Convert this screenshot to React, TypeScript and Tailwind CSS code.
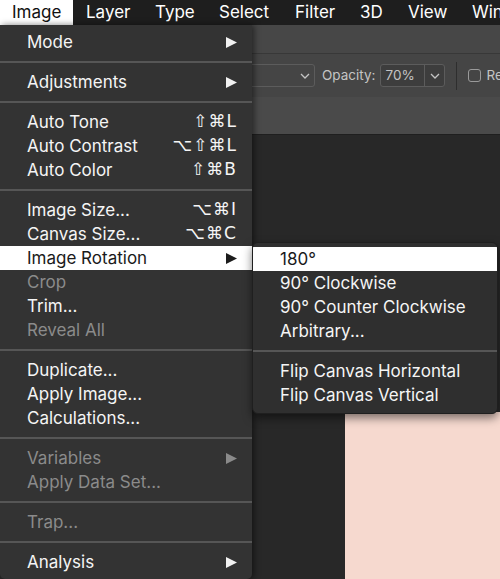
type Item =
  | { sep: true }
  | { label: string; keys?: string; arrow?: boolean; disabled?: boolean; active?: boolean; sep?: false };

const mainItems: Item[] = [
  { label: "Mode", arrow: true },
  { sep: true },
  { label: "Adjustments", arrow: true },
  { sep: true },
  { label: "Auto Tone", keys: "⇧⌘L" },
  { label: "Auto Contrast", keys: "⌥⇧⌘L" },
  { label: "Auto Color", keys: "⇧⌘B" },
  { sep: true },
  { label: "Image Size...", keys: "⌥⌘I" },
  { label: "Canvas Size...", keys: "⌥⌘C" },
  { label: "Image Rotation", arrow: true, active: true },
  { label: "Crop", disabled: true },
  { label: "Trim..." },
  { label: "Reveal All", disabled: true },
  { sep: true },
  { label: "Duplicate..." },
  { label: "Apply Image..." },
  { label: "Calculations..." },
  { sep: true },
  { label: "Variables", arrow: true, disabled: true },
  { label: "Apply Data Set...", disabled: true },
  { sep: true },
  { label: "Trap...", disabled: true },
  { sep: true },
  { label: "Analysis", arrow: true },
];

const subItems: Item[] = [
  { label: "180°", active: true },
  { label: "90° Clockwise" },
  { label: "90° Counter Clockwise" },
  { label: "Arbitrary..." },
  { sep: true },
  { label: "Flip Canvas Horizontal" },
  { label: "Flip Canvas Vertical" },
];

const menuBar = [
  { label: "Image", w: "w-[73px]", active: true },
  { label: "Layer", w: "w-[69px]" },
  { label: "Type", w: "w-[64px]" },
  { label: "Select", w: "w-[76px]" },
  { label: "Filter", w: "w-[65px]" },
  { label: "3D", w: "w-[48px]" },
  { label: "View", w: "w-[64px]" },
  { label: "Window", w: "w-[80px]" },
];

function Arrow({ dark, dim }: { dark?: boolean; dim?: boolean }) {
  return (
    <svg width="11" height="11" viewBox="0 0 11 11" className="shrink-0">
      <polygon points="0,0 11,5.5 0,11" fill={dark ? "#1c1c1c" : dim ? "#8a8a8a" : "#f2f2f2"} />
    </svg>
  );
}

function Chevron() {
  return (
    <svg width="10" height="6" viewBox="0 0 10 6">
      <path d="M1 1l4 4 4-4" stroke="#c4c4c4" strokeWidth="1.3" fill="none" />
    </svg>
  );
}

function Rows({ items }: { items: Item[] }) {
  return (
    <>
      {items.map((it, i) => {
        if (it.sep) {
          return (
            <div key={i} className="flex h-[16px] items-center">
              <div className="h-[2px] w-full bg-[#565656]" />
            </div>
          );
        }
        const color = it.active ? "text-[#1a1a1a]" : it.disabled ? "text-[#8b8b8b]" : "text-[#f5f5f5]";
        return (
          <div
            key={i}
            className={`flex h-[24px] items-center justify-between pl-[27px] pr-[15px] ${it.active ? "bg-white" : ""} ${color}`}
          >
            <span className="whitespace-nowrap leading-[24px]">{it.label}</span>
            {it.keys && (
              <span className="whitespace-nowrap text-[17px] tracking-[1px] [font-family:'DejaVu_Sans',sans-serif]">
                {it.keys}
              </span>
            )}
            {it.arrow && <Arrow dark={it.active} dim={it.disabled} />}
          </div>
        );
      })}
    </>
  );
}

export default function App() {
  return (
    <div className="relative flex h-[579px] w-[500px] flex-col overflow-hidden bg-[#282828] text-[17px] [font-family:Inter,sans-serif]">
      {/* Menu bar */}
      <div className="flex h-[25px] shrink-0 items-center bg-[#1e1e1e] text-white">
        {menuBar.map((m) => (
          <div
            key={m.label}
            className={`flex h-full shrink-0 items-center ${m.w} ${m.active ? "bg-white pl-[12px] text-[#111]" : "pl-[13px]"}`}
          >
            {m.label}
          </div>
        ))}
      </div>

      {/* App chrome behind the menu */}
      <div className="h-[28px] shrink-0 bg-[#474747]" />
      <div className="h-px shrink-0 bg-[#383838]" />
      <div className="flex h-[43px] shrink-0 items-center bg-[#454545] text-[13.5px] text-[#c4c4c4]">
        <div className="ml-[200px] flex h-[23px] w-[115px] shrink-0 items-center justify-end rounded-[3px] border border-[#5c5c5c] pr-[4px]">
          <Chevron />
        </div>
        <span className="ml-[7px] shrink-0">Opacity:</span>
        <div className="ml-[5px] flex h-[23px] w-[65px] shrink-0 overflow-hidden rounded-[3px] border border-[#5c5c5c] bg-[#3d3d3d]">
          <div className="flex w-[44px] items-center border-r border-[#5c5c5c] pl-[4px]">70%</div>
          <div className="flex flex-1 items-center justify-center">
            <Chevron />
          </div>
        </div>
        <div className="ml-[11px] h-[28px] w-px shrink-0 bg-[#2e2e2e]" />
        <div className="ml-[11px] h-[13px] w-[13px] shrink-0 rounded-[3px] border border-[#9a9a9a]" />
        <span className="ml-[5px] shrink-0 whitespace-nowrap">Resample</span>
      </div>
      <div className="h-[37px] shrink-0 bg-[#4a4a4a]" />
      <div className="h-px shrink-0 bg-[#1f1f1f]" />
      <div className="flex flex-1 pl-[345px] pt-[277px]">
        <div className="flex-1 bg-[#f6d9cf]" />
      </div>

      {/* Image menu */}
      <div className="absolute left-0 top-[25px] w-[252px] rounded-b-[5px] bg-[#333333] pt-[5px] pb-[5px] shadow-[2px_0_6px_rgba(0,0,0,0.5)]">
        <Rows items={mainItems} />
      </div>

      {/* Image Rotation submenu */}
      <div className="absolute left-[252px] top-[242px] w-[246px] overflow-hidden rounded-[6px] border border-[#1f1f1f] bg-[#2f2f2f] pt-[4px] pb-[6px] shadow-[0_4px_10px_rgba(0,0,0,0.5)]">
        <Rows items={subItems} />
      </div>
    </div>
  );
}
